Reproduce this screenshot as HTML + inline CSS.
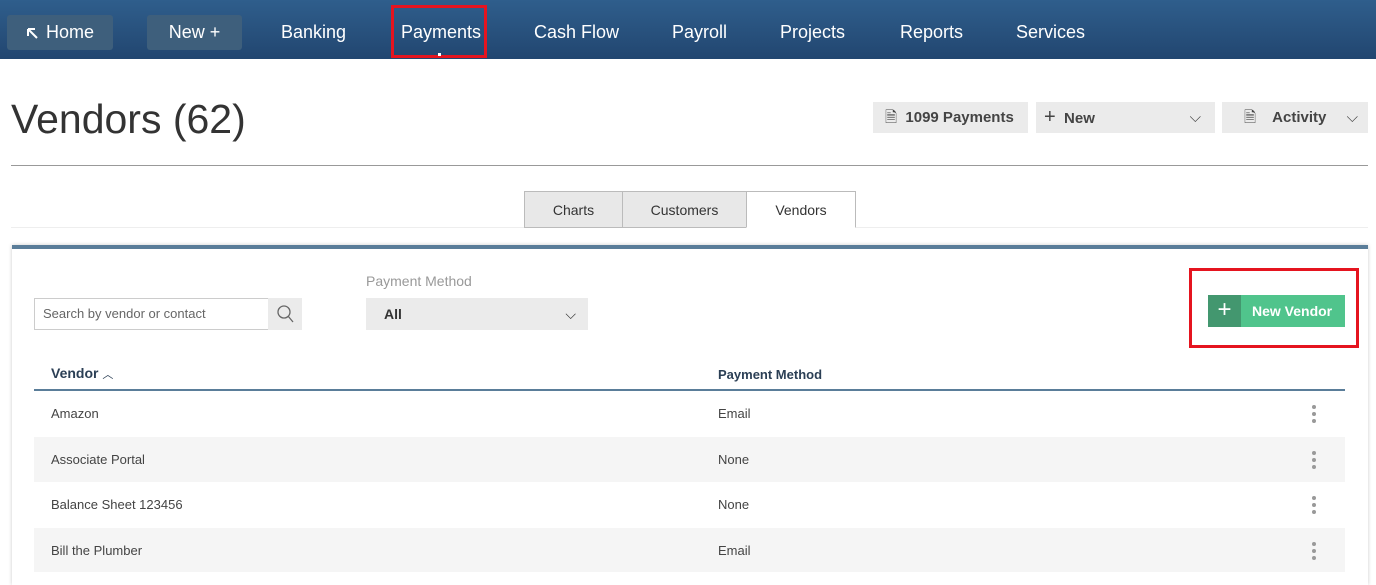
<!DOCTYPE html>
<html><head><style>
*{box-sizing:border-box;margin:0;padding:0}
body{width:1376px;height:572px;overflow:hidden;background:#fff;font-family:"Liberation Sans",sans-serif;position:relative;color:#333}
.nav{position:absolute;left:0;top:0;width:1376px;height:59px;background:linear-gradient(#2f5e8c,#224670)}
.nav .it{position:absolute;top:0;height:59px;line-height:64px;color:#fff;font-size:18px}
.nb{position:absolute;top:15px;height:35px;background:#3e5f7c;border-radius:3px;color:#fff;font-size:18px;line-height:35px;text-align:center}
.abs{position:absolute}
.btn{position:absolute;top:102px;height:31px;background:#ebebeb;font-size:15px;font-weight:bold;color:#444;line-height:31px}
.tab{position:absolute;top:191px;height:37px;border:1px solid #bbb;background:#e8e8e8;font-size:14px;line-height:37px;text-align:center;color:#333}
.row{position:absolute;left:34px;width:1311px;font-size:13px;color:#444}
.row span{position:absolute;top:0}
.dots{position:absolute;left:1278px;width:4px}
.dots i{display:block;width:4px;height:4px;border-radius:2px;background:#999;margin-bottom:3px}
</style></head><body>
<div class="nav">
 <div class="nb" style="left:7px;width:106px"><svg width="12" height="12" style="vertical-align:-1px;margin-right:8px"><path d="M2 2h7M2 2v7M2 2l9 9" stroke="#fff" stroke-width="2" fill="none"/></svg>Home</div>
 <div class="nb" style="left:147px;width:95px">New +</div>
 <div class="it" style="left:281px">Banking</div>
 <div class="it" style="left:401px">Payments</div>
 <div class="it" style="left:534px">Cash Flow</div>
 <div class="it" style="left:672px">Payroll</div>
 <div class="it" style="left:780px">Projects</div>
 <div class="it" style="left:900px">Reports</div>
 <div class="it" style="left:1016px">Services</div>
</div>
<div class="abs" style="left:391px;top:5px;width:96px;height:53px;border:3px solid #e5141f"></div>
<div class="abs" style="left:438px;top:53px;width:3px;height:3px;background:#fff"></div>
<div class="abs" style="left:11px;top:96px;font-size:41px;color:#333">Vendors (62)</div>
<div class="btn" style="left:873px;width:155px"><span style="margin-left:12px;font-weight:normal">🗎</span>&nbsp; 1099 Payments</div>
<div class="btn" style="left:1036px;width:179px"><span style="margin-left:8px;font-weight:normal;font-size:20px">+</span>&nbsp; New<span style="position:absolute;right:14px;font-weight:normal">⌵</span></div>
<div class="btn" style="left:1222px;width:146px"><span style="margin-left:22px;font-weight:normal">🗎</span>&nbsp;&nbsp;&nbsp; Activity<span style="position:absolute;right:10px;font-weight:normal">⌵</span></div>
<div class="abs" style="left:11px;top:165px;width:1357px;height:1px;background:#999"></div>
<div class="abs" style="left:11px;top:227px;width:1357px;height:1px;background:#eee"></div>
<div class="tab" style="left:524px;width:99px">Charts</div>
<div class="tab" style="left:622px;width:125px">Customers</div>
<div class="tab" style="left:746px;width:110px;background:#fff;border-bottom-color:#fff">Vendors</div>
<div class="abs" style="left:12px;top:245px;width:1356px;height:340px;background:#fff;border-top:4px solid #5a7d99;box-shadow:0 0 4px rgba(0,0,0,.2)"></div>
<div class="abs" style="left:366px;top:273px;font-size:14px;color:#999">Payment Method</div>
<div class="abs" style="left:34px;top:298px;width:235px;height:32px;border:1px solid #ccc;font-size:13px;color:#666;line-height:30px;padding-left:8px">Search by vendor or contact</div>
<div class="abs" style="left:268px;top:298px;width:34px;height:32px;background:#ebebeb"><svg width="34" height="32"><circle cx="16" cy="14" r="6" fill="none" stroke="#666" stroke-width="1.3"/><path d="M20 18l5 6" stroke="#666" stroke-width="1.3"/></svg></div>
<div class="abs" style="left:366px;top:298px;width:222px;height:32px;background:#ebebeb;font-size:14px;font-weight:bold;line-height:32px;padding-left:18px;color:#333">All<span style="position:absolute;right:12px;font-weight:normal">⌵</span></div>
<div class="abs" style="left:1189px;top:268px;width:170px;height:80px;border:3px solid #e5141f"></div>
<div class="abs" style="left:1208px;top:295px;width:137px;height:32px;background:#50c48c;color:#fff;font-size:14px;font-weight:bold;line-height:32px"><div style="position:absolute;left:0;top:0;width:33px;height:32px;background:#43976f;text-align:center;font-weight:normal;font-size:24px;line-height:30px">+</div><span style="position:absolute;left:44px">New Vendor</span></div>
<div class="abs" style="left:51px;top:365px;font-size:14px;font-weight:bold;color:#2b3f55">Vendor <span style="font-weight:normal;font-size:11px">︿</span></div>
<div class="abs" style="left:718px;top:367px;font-size:13px;font-weight:bold;color:#2b3f55">Payment Method</div>
<div class="abs" style="left:34px;top:389px;width:1311px;height:2px;background:#5a7d99"></div>
<div class="row" style="top:391px;height:46px;background:#fff"><span style="left:17px;top:15px">Amazon</span><span style="left:684px;top:15px">Email</span><div class="dots" style="top:14px"><i></i><i></i><i></i></div></div>
<div class="row" style="top:437px;height:45px;background:#f5f5f5"><span style="left:17px;top:15px">Associate Portal</span><span style="left:684px;top:15px">None</span><div class="dots" style="top:14px"><i></i><i></i><i></i></div></div>
<div class="row" style="top:482px;height:46px;background:#fff"><span style="left:17px;top:15px">Balance Sheet 123456</span><span style="left:684px;top:15px">None</span><div class="dots" style="top:14px"><i></i><i></i><i></i></div></div>
<div class="row" style="top:528px;height:44px;background:#f5f5f5"><span style="left:17px;top:15px">Bill the Plumber</span><span style="left:684px;top:15px">Email</span><div class="dots" style="top:14px"><i></i><i></i><i></i></div></div>
</body></html>
